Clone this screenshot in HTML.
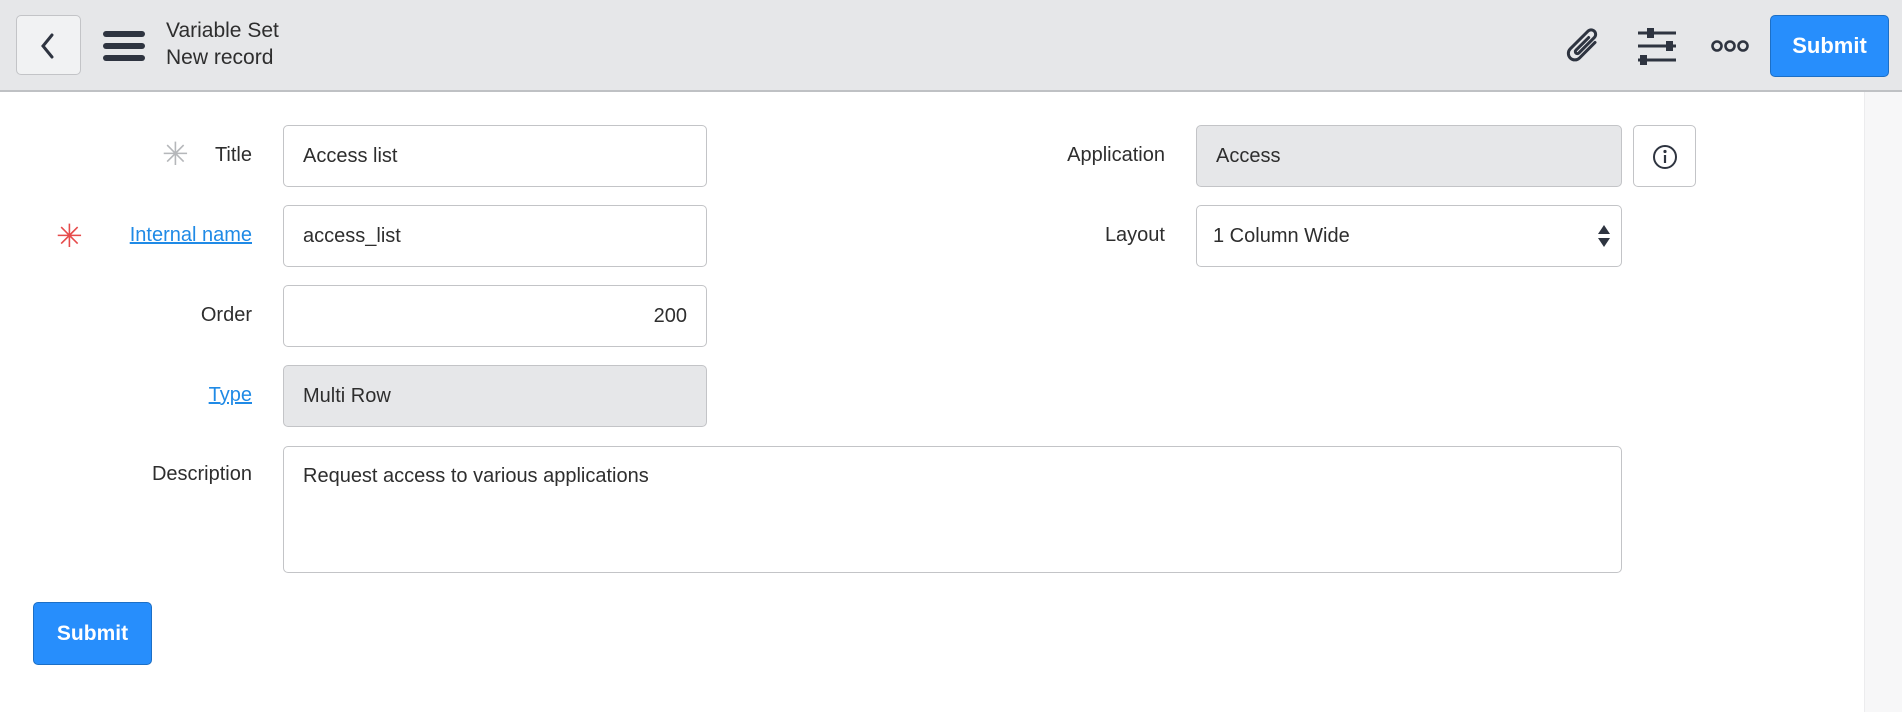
<!DOCTYPE html>
<html><head><meta charset="utf-8"><style>
*{box-sizing:border-box;margin:0;padding:0}
body{width:1902px;height:712px;background:#fff;font-family:"Liberation Sans",sans-serif;color:#2e2e2e;position:relative;overflow:hidden}
.hdr{position:absolute;left:0;top:0;width:1902px;height:92px;background:#e6e7e9;border-bottom:2px solid #bfc1c4}
.a{position:absolute}
.inp{position:absolute;border:1.5px solid #c3c4c7;border-radius:5px;background:#fff;font-size:20px;padding-left:19px;display:flex;align-items:center;height:62px}
.ro{background:#e6e7e9}
.lbl{position:absolute;font-size:20px;text-align:right;width:250px}
.lnk{color:#1f8ae6;text-decoration:underline}
.btn{position:absolute;background:#278efc;border:1.5px solid #1c6fc6;border-radius:5px;color:#fff;font-weight:bold;font-size:21px;display:flex;align-items:center;justify-content:center}
</style></head><body>
<div class="hdr">
 <div class="a" style="left:16px;top:15px;width:65px;height:60px;border:1.5px solid #c3c4c7;border-radius:5px;background:#f1f2f3"></div>
 <svg class="a" style="left:38px;top:31px" width="20" height="30"><path d="M14 4 L5 15 L14 26" stroke="#2e3440" stroke-width="3" fill="none" stroke-linecap="round"/></svg>
 <svg class="a" style="left:103px;top:30px" width="42" height="32"><g stroke="#2e3440" stroke-width="6" stroke-linecap="round"><line x1="3" y1="4" x2="39" y2="4"/><line x1="3" y1="16" x2="39" y2="16"/><line x1="3" y1="28" x2="39" y2="28"/></g></svg>
 <div class="a" style="left:166px;top:17px;font-size:21px;line-height:27px;color:#2e2e2e">Variable Set<br>New record</div>
 <svg class="a" style="left:1560px;top:22px" width="46" height="48" viewBox="0 0 46 48"><g transform="translate(23 24) rotate(45) translate(-9 -23)"><path d="M15 12 V34 A6.5 6.5 0 0 1 2 34 V9 A4.5 4.5 0 0 1 11 9 V31 A2 2 0 0 1 7 31 V13" stroke="#2e3440" stroke-width="3" fill="none" stroke-linecap="round"/></g></svg>
 <svg class="a" style="left:1636px;top:25px" width="44" height="44"><g stroke="#2e3440" stroke-width="3"><line x1="2" y1="8" x2="40" y2="8"/><line x1="2" y1="21" x2="40" y2="21"/><line x1="2" y1="35" x2="40" y2="35"/></g><g fill="#2e3440"><rect x="11" y="3" width="7" height="10"/><rect x="30" y="16" width="7" height="10"/><rect x="4" y="30" width="7" height="10"/></g></svg>
 <svg class="a" style="left:1710px;top:38px" width="42" height="16"><g stroke="#2e3440" stroke-width="2.6" fill="none"><circle cx="7" cy="8" r="4.5"/><circle cx="20" cy="8" r="4.5"/><circle cx="33" cy="8" r="4.5"/></g></svg>
 <div class="btn" style="left:1770px;top:15px;width:119px;height:62px;font-size:22px">Submit</div>
</div>
<div class="a" style="left:1864px;top:92px;width:38px;height:620px;background:#f7f7f8;border-left:1px solid #ececee"></div>

<div class="a" style="left:162px;top:138px;font-size:32px;color:#b5b7ba;line-height:32px">✳</div>
<div class="lbl" style="left:2px;top:144px">Title</div>
<div class="inp" style="left:283px;top:125px;width:424px">Access list</div>

<div class="a" style="left:56px;top:220px;font-size:32px;color:#e64b4b;line-height:32px">✳</div>
<div class="lbl lnk" style="left:2px;top:224px">Internal name</div>
<div class="inp" style="left:283px;top:205px;width:424px">access_list</div>

<div class="lbl" style="left:2px;top:304px">Order</div>
<div class="inp" style="left:283px;top:285px;width:424px;justify-content:flex-end;padding-right:19px">200</div>

<div class="lbl lnk" style="left:2px;top:384px">Type</div>
<div class="inp ro" style="left:283px;top:365px;width:424px">Multi Row</div>

<div class="lbl" style="left:2px;top:463px">Description</div>
<div class="inp" style="left:283px;top:446px;width:1339px;height:127px;align-items:flex-start;padding-top:18px">Request access to various applications</div>

<div class="lbl" style="left:915px;top:144px">Application</div>
<div class="inp ro" style="left:1196px;top:125px;width:426px">Access</div>
<div class="a" style="left:1633px;top:125px;width:63px;height:62px;border:1.5px solid #c3c4c7;border-radius:5px"></div>
<svg class="a" style="left:1651px;top:143px" width="28" height="28"><circle cx="14" cy="14" r="11" stroke="#2e3440" stroke-width="2" fill="none"/><circle cx="14" cy="8.5" r="1.6" fill="#2e3440"/><line x1="14" y1="12" x2="14" y2="20" stroke="#2e3440" stroke-width="2.2"/></svg>

<div class="lbl" style="left:915px;top:224px">Layout</div>
<div class="inp" style="left:1196px;top:205px;width:426px;padding-left:16px">1 Column Wide</div>
<svg class="a" style="left:1597px;top:224px" width="14" height="24"><path d="M7 1 L13 10 L1 10 Z M1 14 L13 14 L7 23 Z" fill="#2e3440"/></svg>

<div class="btn" style="left:33px;top:602px;width:119px;height:63px">Submit</div>
</body></html>
